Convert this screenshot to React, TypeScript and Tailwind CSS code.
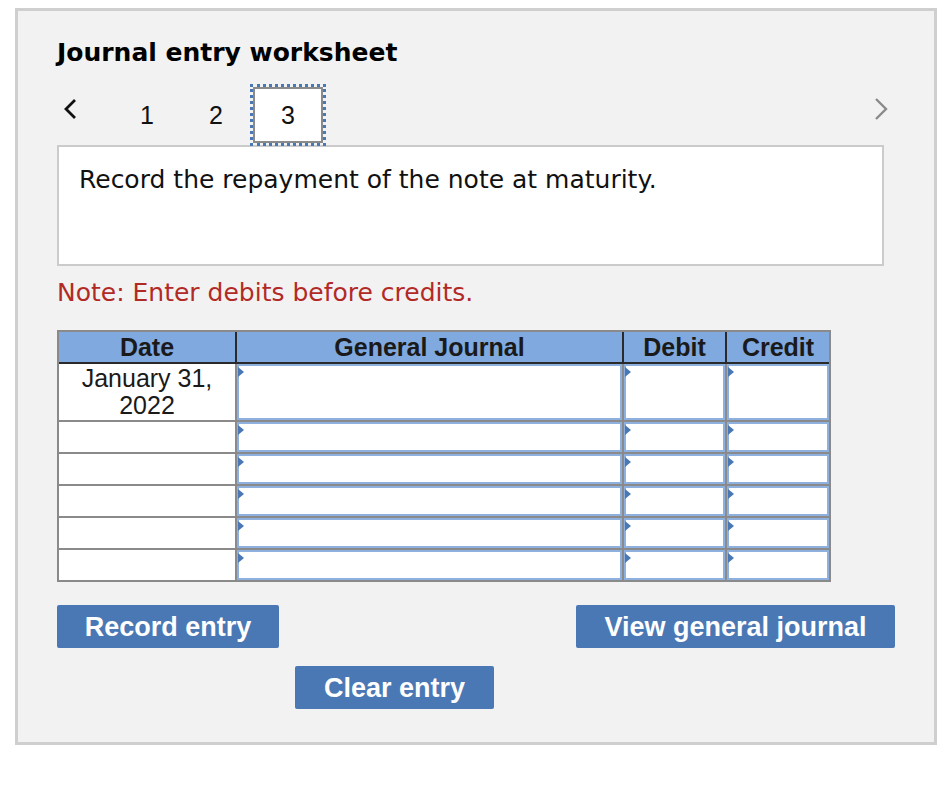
import React from "react";

const verdana = { fontFamily: '"DejaVu Sans", Verdana, sans-serif' };
const arial = { fontFamily: '"Liberation Sans", Arial, Helvetica, sans-serif' };

function InputCell({ w, last }: { w: string; last?: boolean }) {
  return (
    <div className={w + " h-full " + (last ? "" : "border-r-2 border-[#8a8a8a]")}>
      <div className="relative h-full w-full border-2 border-[#8db0df] bg-white">
        <svg className="absolute left-[-1px] top-[1px]" width="6" height="10" viewBox="0 0 6 10">
          <polygon points="0,0 6,5 0,10" fill="#4a78b5" />
        </svg>
      </div>
    </div>
  );
}

export default function App() {
  const rows = [0, 1, 2, 3, 4, 5];
  return (
    <div className="min-h-[798px] w-[950px] bg-white pl-[15px] pt-[8px]">
      <div className="h-[737px] w-[922px] border-[3px] border-[#cfcfcf] bg-[#f2f2f2] pl-[39px] pt-[27px]">
        <h1 className="text-[25px] font-bold leading-[30px] text-black" style={verdana}>
          Journal entry worksheet
        </h1>
        <div className="mt-[16px] flex h-[62px] w-[831px] items-center" style={arial}>
          <svg width="16" height="22" viewBox="0 0 16 22" className="ml-[5px] self-start mt-[14px]">
            <polyline points="13,2 4,11 13,20" fill="none" stroke="#111" strokeWidth="2.8" />
          </svg>
          <span className="ml-[59px] w-[20px] text-center text-[25px] leading-[30px] text-[#111]">1</span>
          <span className="ml-[49px] w-[20px] text-center text-[25px] leading-[30px] text-[#111]">2</span>
          <div className="ml-[24px] border-[3px] border-dotted border-[#4a78b5]">
            <div className="flex h-[56px] w-[70px] items-center justify-center border-2 border-[#8a8a8a] bg-white text-[25px] leading-[30px] text-[#111]">
              3
            </div>
          </div>
          <div className="flex-1" />
          <svg width="14" height="24" viewBox="0 0 14 24" className="self-start mt-[13px]">
            <polyline points="2,2 12,12 2,22" fill="none" stroke="#8a8a8a" strokeWidth="2.4" />
          </svg>
        </div>
        <div
          className="mt-[-1px] h-[121px] w-[827px] border-2 border-[#cbcbcb] bg-white pl-[20px] pt-[18px] text-[25px] leading-[30px] text-[#111]"
          style={verdana}
        >
          Record the repayment of the note at maturity.
        </div>
        <p className="mt-[12px] text-[25px] leading-[30px] text-[#b22a26]" style={verdana}>
          Note: Enter debits before credits.
        </p>
        <div className="mt-[22px] w-[774px] border-2 border-[#8a8a8a] text-[#1a1a1a]" style={arial}>
          <div className="flex h-[32px] border-b-2 border-[#2a2a2a] bg-[#80a9df] text-[25px] font-bold leading-[30px]">
            <div className="flex w-[178px] items-center justify-center border-r-2 border-[#2a2a2a]">Date</div>
            <div className="flex w-[387px] items-center justify-center border-r-2 border-[#2a2a2a]">General Journal</div>
            <div className="flex w-[103px] items-center justify-center border-r-2 border-[#2a2a2a]">Debit</div>
            <div className="flex w-[102px] items-center justify-center">Credit</div>
          </div>
          {rows.map((r) => (
            <div
              key={r}
              className={
                "flex " +
                (r === 0 ? "h-[58px] border-b-2 border-[#8a8a8a]" : r === 5 ? "h-[30px]" : "h-[32px] border-b-2 border-[#8a8a8a]")
              }
            >
              <div className="h-full w-[178px] border-r-2 border-[#8a8a8a] bg-white pt-[1px] text-center text-[25px] leading-[27px]">
                {r === 0 ? (
                  <>
                    January 31,
                    <br />
                    2022
                  </>
                ) : null}
              </div>
              <InputCell w="w-[387px]" />
              <InputCell w="w-[103px]" />
              <InputCell w="w-[102px]" last />
            </div>
          ))}
        </div>
        <div className="mt-[23px] flex w-[838px] items-start justify-between text-[27px] font-bold leading-[30px] text-white" style={arial}>
          <button className="h-[43px] w-[222px] rounded-[2px] bg-[#4a78b5]">Record entry</button>
          <button className="h-[43px] w-[319px] rounded-[2px] bg-[#4a78b5]">View general journal</button>
        </div>
        <div className="mt-[18px] pl-[238px] text-[27px] font-bold leading-[30px] text-white" style={arial}>
          <button className="h-[43px] w-[199px] rounded-[2px] bg-[#4a78b5]">Clear entry</button>
        </div>
      </div>
    </div>
  );
}
